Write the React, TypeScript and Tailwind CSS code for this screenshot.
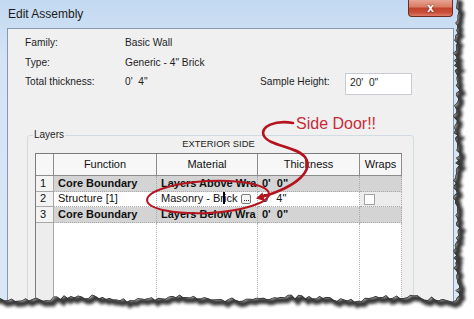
import React from "react";

// deterministic noise for the torn paper edge
function rnd(i: number) {
  const s = Math.sin(i * 12.9898 + 78.233) * 43758.5453;
  return s - Math.floor(s);
}

function tornPoints() {
  const pts: [number, number][] = [];
  for (let i = 0, y = -2; y <= 298; i++, y += 2.5) {
    pts.push([456 + (rnd(i) - 0.5) * 4.5 + Math.sin(y / 11) * 1.4, y]);
  }
  for (let j = 0, x = 456; x >= -6; j++, x -= 3.5) {
    pts.push([x, 298 + (rnd(j + 300) - 0.5) * 4.5 + Math.sin(x / 17) * 1.8]);
  }
  return pts;
}

const TornEdge = () => {
  const pts = tornPoints();
  const line = pts.map((p, i) => `${i ? "L" : "M"}${p[0].toFixed(1)},${p[1].toFixed(1)}`).join(" ");
  const outside = `M480,-4 ${line.replace("M", "L")} L-6,330 L480,330 Z`;
  return (
    <svg className="absolute inset-0 pointer-events-none" width={474} height={319}>
      <defs>
        <clipPath id="outside">
          <path d={outside} />
        </clipPath>
        <filter id="blur" x="-10%" y="-10%" width="120%" height="120%">
          <feGaussianBlur stdDeviation="1.4" />
        </filter>
      </defs>
      <path d={outside} fill="#ffffff" />
      <g clipPath="url(#outside)">
        <path d={line} transform="translate(3,3)" fill="none" stroke="#151515" strokeWidth={6} opacity={0.85} filter="url(#blur)" />
        <path d={line} fill="none" stroke="#2e2e2e" strokeWidth={1.4} />
      </g>
    </svg>
  );
};

const Annotation = () => (
  <>
    <svg className="absolute inset-0 pointer-events-none" width={474} height={319}>
      <ellipse cx={208} cy={197} rx={61} ry={16} transform="rotate(-3 208 197)" fill="none" stroke="#b5141f" strokeWidth={2} />
      <path
        d="M293,123 C276,120 259,126 264,136 C269,146 296,146 305,157 C314,170 298,186 263,196.5"
        fill="none"
        stroke="#b5141f"
        strokeWidth={2.6}
        strokeLinecap="round"
      />
      <polygon points="256,198.5 264.5,201 262.5,192.5" fill="#b5141f" />
    </svg>
    <div className="absolute left-[296px] top-[115px] text-[16px] leading-[18px] text-[#c82a3a]">Side Door!!</div>
  </>
);

const numCell = "w-[18px] pl-[4px] bg-[#f3f3f3] border-r border-b border-[#a8a8a8] flex items-center";
const dot = "border-r border-b border-dotted border-[#a9a9a9] flex items-center pl-[4px] overflow-hidden whitespace-pre";

function LayersTable() {
  return (
    <div className="flex-1 flex flex-col w-[367px] border-l border-t border-[#7c7c7c] text-[11px] text-[#111]">
      <div className="flex h-[22px] bg-[#f7f7f7]">
        <div className="w-[18px] border-r border-b border-[#8c8c8c]" />
        <div className="w-[103px] border-r border-b border-[#8c8c8c] flex items-center justify-center">Function</div>
        <div className="w-[101px] border-r border-b border-[#8c8c8c] flex items-center justify-center">Material</div>
        <div className="w-[102px] border-r border-b border-[#8c8c8c] flex items-center justify-center">Thickness</div>
        <div className="w-[42px] border-r border-b border-[#8c8c8c] flex items-center justify-center">Wraps</div>
      </div>

      <div className="flex h-[16px] bg-[#d4d4d4] font-bold">
        <div className={`${numCell} font-normal`}>1</div>
        <div className={`w-[103px] ${dot}`}>Core Boundary</div>
        <div className={`w-[101px] ${dot}`}>Layers Above Wra</div>
        <div className={`w-[102px] ${dot}`}>0'  0"</div>
        <div className={`w-[42px] ${dot}`} />
      </div>

      <div className="flex h-[15px] bg-white">
        <div className={numCell}>2</div>
        <div className={`w-[103px] ${dot}`}>Structure [1]</div>
        <div className={`w-[101px] ${dot} gap-[4px]`}>
          <span>
            Masonry - Bri<span className="inline-block w-[2px] h-[12px] bg-black -ml-[3px] mr-[1px] align-[-2px]" />ck
          </span>
          <span className="w-[10px] h-[10px] rounded-[2px] border border-[#7a7a7a] bg-[#f4f4f4] flex items-end justify-center gap-[1px] pb-[2px]">
            <span className="w-[1px] h-[1px] bg-[#333]" />
            <span className="w-[1px] h-[1px] bg-[#333]" />
            <span className="w-[1px] h-[1px] bg-[#333]" />
          </span>
        </div>
        <div className={`w-[102px] ${dot}`}>0'  4"</div>
        <div className={`w-[42px] ${dot} bg-[#ececec]`}>
          <span className="w-[11px] h-[11px] border border-[#a4a4a4] bg-white mt-[2px]" />
        </div>
      </div>

      <div className="flex h-[16px] bg-[#d4d4d4] font-bold">
        <div className={`${numCell} font-normal`}>3</div>
        <div className={`w-[103px] ${dot}`}>Core Boundary</div>
        <div className={`w-[101px] ${dot}`}>Layers Below Wra</div>
        <div className={`w-[102px] ${dot}`}>0'  0"</div>
        <div className={`w-[42px] ${dot}`} />
      </div>

      <div className="flex-1 flex">
        <div className="w-[18px] bg-[#ededed] border-r border-[#a8a8a8]" />
        <div className="w-[103px] bg-white border-r border-dotted border-[#b0b0b0]" />
        <div className="w-[101px] bg-white border-r border-dotted border-[#b0b0b0]" />
        <div className="w-[102px] bg-white border-r border-dotted border-[#b0b0b0]" />
        <div className="w-[42px] bg-white border-r border-dotted border-[#b0b0b0]" />
      </div>
    </div>
  );
}

export default function App() {
  return (
    <div className="relative w-[474px] h-[319px] overflow-hidden bg-white font-['Liberation_Sans',Arial,sans-serif]">
      <div className="w-[461px] h-full flex flex-col px-[7px] bg-[linear-gradient(to_bottom,#c3d9f1,#d4e4f5_60px,#dae8f6)]">
        {/* title bar */}
        <div className="h-[28px] flex items-start justify-between shrink-0">
          <div className="pl-[1px] pt-[7px] text-[12px] leading-[15px] text-[#1b1b1b]">Edit Assembly</div>
          <div className="mr-[1px] w-[45px] h-[17px] rounded-b-[4px] border border-t-0 border-[#6d2b22] bg-[linear-gradient(to_bottom,#e7a493_0%,#d97c66_42%,#c2442d_52%,#c8503a_78%,#df7c66_100%)] flex items-center justify-center text-white font-bold text-[12px] leading-[12px] [text-shadow:0_0_2px_#5a1a10]">
            x
          </div>
        </div>

        {/* client area */}
        <div className="flex-1 flex flex-col border border-[#8699b2] bg-[#f0f0f0]">
          <div className="pl-[17px] pt-[4px] text-[10.2px] text-[#1e1e1e]">
            <div className="flex h-[19.5px] items-center">
              <span className="w-[100px]">Family:</span>
              <span>Basic Wall</span>
            </div>
            <div className="flex h-[19.5px] items-center">
              <span className="w-[100px]">Type:</span>
              <span>Generic - 4" Brick</span>
            </div>
            <div className="flex h-[19.5px] items-center">
              <span className="w-[100px]">Total thickness:</span>
              <span className="w-[135px] whitespace-pre">0'  4"</span>
              <span className="w-[85px]">Sample Height:</span>
              <div className="w-[67px] h-[22px] mt-[4px] border border-[#c9cdd3] bg-white pl-[4px] pt-[3px] whitespace-pre leading-[12px]">
                20'  0"
              </div>
            </div>
          </div>

          {/* Layers group box */}
          <div className="relative flex-1 flex flex-col ml-[19px] mt-[43px] w-[387px] pl-[7px] pr-[11px] border border-[#d3dbe2] rounded-[3px]">
            <div className="absolute left-[5px] -top-[7px] px-[1px] bg-[#f0f0f0] text-[10px] leading-[12px] text-[#1e1e1e]">
              Layers
            </div>
            <div className="h-[17px] w-[367px] flex items-center justify-center text-[9.4px] text-[#1e1e1e]">EXTERIOR SIDE</div>
            <LayersTable />
          </div>
        </div>
      </div>

      <Annotation />
      <TornEdge />
    </div>
  );
}
